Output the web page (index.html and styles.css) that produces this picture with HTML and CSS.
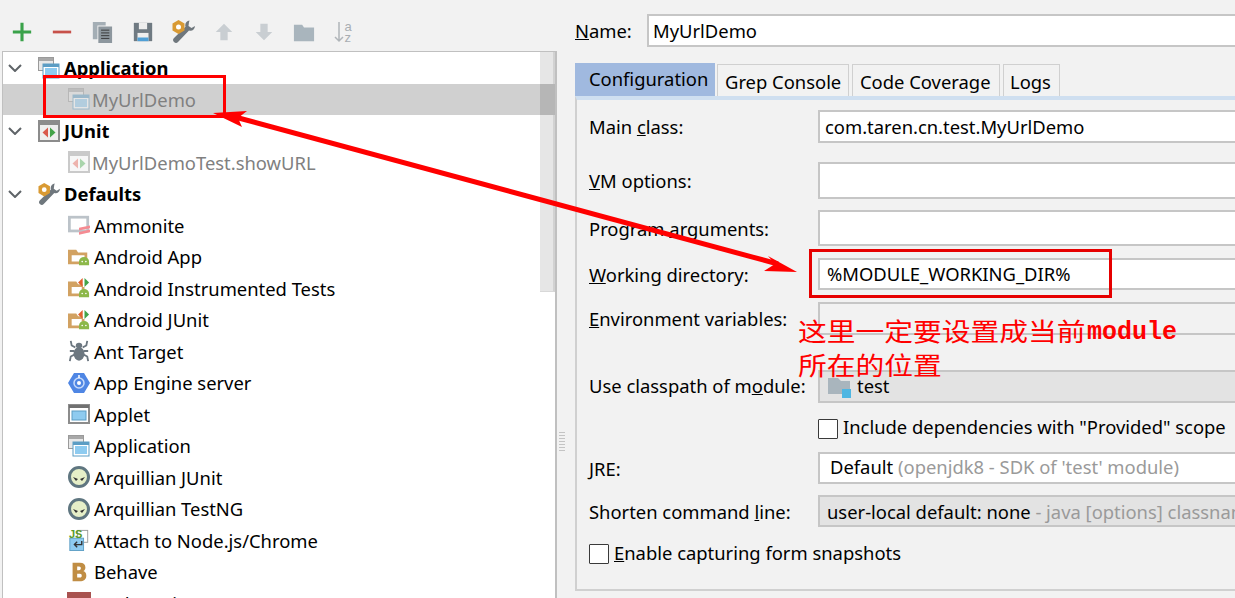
FILE: index.html
```html
<!DOCTYPE html>
<html lang="en">
<head>
<meta charset="utf-8">
<title>Run/Debug Configurations</title>
<link rel="stylesheet" href="styles.css">
</head>
<body>
<svg class="defs" width="0" height="0">
  <defs>
    <symbol id="i-app" viewBox="0 0 22 22">
      <rect x="0.5" y="0.5" width="15" height="13" fill="#e8e8e8" stroke="#9a9a9a"/>
      <rect x="1" y="1" width="14" height="3" fill="#a8a8a8"/>
      <rect x="5" y="7" width="16" height="14" fill="#fff" stroke="#5c9dc4"/>
      <rect x="5" y="7" width="16" height="3" fill="#5c9dc4"/>
      <rect x="7" y="11" width="12" height="8" fill="#8ecbf0"/>
    </symbol>
    <symbol id="i-junit" viewBox="0 0 22 22">
      <rect x="1" y="1" width="20" height="20" fill="#eee" stroke="#8c8c8c" stroke-width="2"/>
      <rect x="1" y="1" width="20" height="4" fill="#8c8c8c"/>
      <path d="M10 7.500v10L4.500 12.500z" fill="#d9594c"/>
      <path d="M12 7.500v10l5.500-5z" fill="#44a349"/>
    </symbol>
    <symbol id="i-wrench" viewBox="0 0 23 23">
      <path d="M17.500.5c-3 .3-5 3.300-4 6.300L2 18c-1.300 1.300-1.300 2.800 0 4s2.800 1.200 4 0L17 10.500c3 1 5.700-1 6-4.500l-3.500 2-3-2 .5-3.800z" fill="#6f777d"/>
      <path d="M6.500 0l6 3.500v7l-6 3.500-6-3.500v-7z" fill="#d99a33"/>
      <circle cx="6.500" cy="7" r="2.500" fill="#fff"/>
    </symbol>
    <symbol id="i-ammonite" viewBox="0 0 24 22">
      <rect x="1.500" y="2.500" width="20" height="15" fill="#fff" stroke="#bcc3c9" stroke-width="3"/>
      <path d="M12 14l12-2.500v3L12 17zM12 18.500l12-2.500v3l-12 2.500z" fill="#f58b92"/>
    </symbol>
    <symbol id="i-android" viewBox="0 0 24 22">
      <path d="M0 3h9l2 3h10v6h-3V9H4v7h8v3H0z" fill="#d2a262"/>
      <path d="M12 20v-4a5.500 5 0 0 1 11 0v4z" fill="#8db84a"/>
      <circle cx="15.500" cy="16" r=".9" fill="#fff"/><circle cx="19.500" cy="16" r=".9" fill="#fff"/>
    </symbol>
    <symbol id="i-android-test" viewBox="0 0 24 24">
      <path d="M0 5h9l2 3h5v3h2V14h-3V11H4v7h8v3H0z" fill="#d2a262"/>
      <path d="M12 22v-4a5.500 5 0 0 1 11 0v4z" fill="#8db84a"/>
      <circle cx="15.500" cy="18" r=".9" fill="#fff"/><circle cx="19.500" cy="18" r=".9" fill="#fff"/>
      <path d="M16 1v10l-5-5z" fill="#e0622f"/><path d="M18 1v10l5-5z" fill="#44a349"/>
    </symbol>
    <symbol id="i-ant" viewBox="0 0 22 24">
      <g stroke="#6c7780" stroke-width="2" fill="none">
        <path d="M7 8L3 6 2 1M15 8l4-2 1-5M6 12H1M16 12h5M6 16l-4 2-1 5M16 16l4 2 1 5"/>
      </g>
      <ellipse cx="11" cy="6" rx="3.500" ry="3" fill="#6c7780"/>
      <ellipse cx="11" cy="15" rx="6" ry="7.500" fill="#6c7780"/>
    </symbol>
    <symbol id="i-engine" viewBox="0 0 22 20">
      <path d="M6 0h10l6 10-6 10H6L0 10z" fill="#4f86e4"/>
      <circle cx="11" cy="10" r="5" fill="none" stroke="#c6dafb" stroke-width="1.500"/>
      <circle cx="11" cy="10" r="2" fill="#fff"/>
      <path d="M11 2v3" stroke="#fff" stroke-width="1.500"/>
    </symbol>
    <symbol id="i-applet" viewBox="0 0 22 20">
      <rect x="1" y="1" width="20" height="18" fill="#fff" stroke="#8c8c8c" stroke-width="2"/>
      <rect x="1" y="1" width="20" height="3" fill="#707070"/>
      <rect x="4" y="7" width="14" height="9" fill="#8ecbf0" stroke="#5c9dc4"/>
    </symbol>
    <symbol id="i-alien" viewBox="0 0 22 22">
      <circle cx="11" cy="11" r="9.500" fill="#e6efc8" stroke="#5f7680" stroke-width="3"/>
      <path d="M5 11l5 2-2 2zM17 11l-5 2 2 2z" fill="#333"/>
    </symbol>
    <symbol id="i-node" viewBox="0 0 22 24">
      <rect x="9.500" y="1.500" width="11" height="13" fill="#fff" stroke="#9a9a9a"/>
      <rect x="1" y="10" width="15" height="13.500" fill="#8ecbf0" stroke="#5c9dc4"/>
      <path d="M14 13v4H6M9 14l-3 3 3 3" fill="none" stroke="#333" stroke-width="1.500"/>
      <text x="0" y="10" class="js-text">JS</text>
    </symbol>
    <symbol id="i-b" viewBox="-4 -2 24 24">
      <path fill-rule="evenodd" d="M1 0h8c4 0 6 2 6 5 0 2-1 3.500-2.500 4 2 .5 3.500 2 3.500 5 0 4-3 6-7 6H1zM6 4v4h2c1.500 0 2-.8 2-2s-.5-2-2-2zM6 12v4h3c1.500 0 2-1 2-2s-.5-2-2-2z" fill="#c08d44"/>
    </symbol>
    <symbol id="i-chev" viewBox="0 0 14 8">
      <path d="M1 1l6 6 6-6" fill="none" stroke="#5f6468" stroke-width="2"/>
    </symbol>
  </defs>
</svg>

<div class="window">
  <div class="left">
    <div class="toolbar">
      <svg class="tool" viewBox="0 0 24 24"><path d="M12 2v20M2 12h20" stroke="#3aa24a" stroke-width="3.400"/></svg>
      <svg class="tool" viewBox="0 0 24 24"><path d="M2 12h20" stroke="#c7514a" stroke-width="3"/></svg>
      <svg class="tool" viewBox="0 0 24 24"><path d="M2 1h14v4H7v15H2z" fill="#a4aeb5"/><rect x="8" y="6" width="15" height="18" fill="#8d979e"/><path d="M11 10h9M11 13h9M11 16h9M11 19h9" stroke="#333" stroke-width="1"/></svg>
      <svg class="tool" viewBox="0 0 24 24"><path d="M2 2h20v20H2z" fill="#6f7a82"/><rect x="7.500" y="2" width="9" height="7" fill="#eee"/><rect x="6" y="13" width="12" height="9" fill="#eee"/><rect x="6" y="18" width="12" height="4" fill="#4f9fd6"/></svg>
      <svg class="tool tool-wrench"><use href="#i-wrench"/></svg>
      <svg class="tool" viewBox="0 0 24 24"><path d="M12 3l9 9h-5v9H8v-9H3z" fill="#c9ced2"/></svg>
      <svg class="tool" viewBox="0 0 24 24"><path d="M12 21l9-9h-5V3H8v9H3z" fill="#c9ced2"/></svg>
      <svg class="tool" viewBox="0 0 24 24"><path d="M1 4h9l2 3h11v15H1z" fill="#a9b5bd"/></svg>
      <div class="tool tool-sort"><svg class="sort-arrow" viewBox="0 0 10 22"><path d="M5 1v19M1 16l4 4 4-4" fill="none" stroke="#b0b5b9" stroke-width="1.500"/></svg><span class="sort-az">a<br>z</span></div>
    </div>
    <div class="tree-frame">
      <div class="tree">
        <div class="row"><svg class="chev"><use href="#i-chev"/></svg><svg class="ico-top"><use href="#i-app"/></svg><b class="group">Application</b></div>
        <div class="row row-sel"><svg class="ico-child dim"><use href="#i-app"/></svg><span class="muted">MyUrlDemo</span></div>
        <div class="row"><svg class="chev"><use href="#i-chev"/></svg><svg class="ico-top"><use href="#i-junit"/></svg><b class="group">JUnit</b></div>
        <div class="row"><svg class="ico-child dim"><use href="#i-junit"/></svg><span class="muted">MyUrlDemoTest.showURL</span></div>
        <div class="row"><svg class="chev"><use href="#i-chev"/></svg><svg class="ico-top"><use href="#i-wrench"/></svg><b class="group">Defaults</b></div>
        <div class="row"><svg class="ico-child"><use href="#i-ammonite"/></svg><span class="item">Ammonite</span></div>
        <div class="row"><svg class="ico-child"><use href="#i-android"/></svg><span class="item">Android App</span></div>
        <div class="row"><svg class="ico-child"><use href="#i-android-test"/></svg><span class="item">Android Instrumented Tests</span></div>
        <div class="row"><svg class="ico-child"><use href="#i-android-test"/></svg><span class="item">Android JUnit</span></div>
        <div class="row"><svg class="ico-child"><use href="#i-ant"/></svg><span class="item">Ant Target</span></div>
        <div class="row"><svg class="ico-child"><use href="#i-engine"/></svg><span class="item">App Engine server</span></div>
        <div class="row"><svg class="ico-child"><use href="#i-applet"/></svg><span class="item">Applet</span></div>
        <div class="row"><svg class="ico-child"><use href="#i-app"/></svg><span class="item">Application</span></div>
        <div class="row"><svg class="ico-child"><use href="#i-alien"/></svg><span class="item">Arquillian JUnit</span></div>
        <div class="row"><svg class="ico-child"><use href="#i-alien"/></svg><span class="item">Arquillian TestNG</span></div>
        <div class="row"><svg class="ico-child"><use href="#i-node"/></svg><span class="item">Attach to Node.js/Chrome</span></div>
        <div class="row"><svg class="ico-child"><use href="#i-b"/></svg><span class="item">Behave</span></div>
        <div class="row"><svg class="chev chev-sub"><use href="#i-chev"/></svg><span class="ico-bnd"></span><span class="item">Bnd OSGi</span></div>
      </div>
      <div class="scrollbar"></div>
    </div>
  </div>

  <div class="splitter"><span class="grip"></span></div>

  <div class="right">
    <div class="name-row">
      <span class="name-label"><u>N</u>ame:</span>
      <div class="field name-field">MyUrlDemo</div>
    </div>
    <div class="tabs">
      <span class="tab tab-on">Configuration</span>
      <span class="tab tab-grep">Grep Console</span>
      <span class="tab tab-cov">Code Coverage</span>
      <span class="tab tab-logs">Logs</span>
    </div>
    <div class="panel">
      <div class="line l-main"><span class="label">Main <u>c</u>lass:</span><div class="field">com.taren.cn.test.MyUrlDemo</div></div>
      <div class="line l-vm"><span class="label"><u>V</u>M options:</span><div class="field"></div></div>
      <div class="line l-args"><span class="label">Program <u>a</u>rguments:</span><div class="field"></div></div>
      <div class="line l-dir"><span class="label"><u>W</u>orking directory:</span><div class="field field-dir">%MODULE_WORKING_DIR%</div></div>
      <div class="line l-env"><span class="label"><u>E</u>nvironment variables:</span><div class="field field-off"></div></div>
      <div class="line l-mod"><span class="label label-high"><span>Use classpath of m<u>o</u>dule:</span></span><div class="field field-sel field-mod">
        <svg class="mod-ico" viewBox="0 0 23 20"><path d="M0 0h10l3 3h9v13H0z" fill="#a9b5bd"/><rect x="14" y="11" width="9" height="9" fill="#4eb6e2"/></svg>test</div></div>
      <div class="line l-inc"><span class="label"></span><label class="check"><span class="box"></span><span class="check-text">Include dependencies with "Provided" scope</span></label></div>
      <div class="line l-jre"><span class="label"><u>J</u>RE:</span><div class="field field-jre">Default <span class="hint">(openjdk8 - SDK of 'test' module)</span></div></div>
      <div class="line l-short"><span class="label">Shorten command <u>l</u>ine:</span><div class="field field-sel field-short">user-local default: none <span class="hint">- java [options] classname [args]</span></div></div>
      <div class="line l-snap"><label class="check"><span class="box"></span><span class="check-text"><u>E</u>nable capturing form snapshots</span></label></div>
    </div>
  </div>

  <svg class="overlay" viewBox="0 0 1235 598">
    <rect x="44.500" y="76.500" width="180" height="40" fill="none" stroke="#f00" stroke-width="3"/>
    <rect x="810.500" y="250.500" width="300" height="46" fill="none" stroke="#e60000" stroke-width="3"/>
    <path d="M235 117L778 264" stroke="#f00" stroke-width="5"/>
    <path d="M213 113L247 111 238 118 242 127z" fill="#f00"/>
    <path d="M797 272L768 256 775 264 764 271z" fill="#f00"/>
  </svg>
  <div class="note">
    <div class="note-line"><span class="note-cjk note-first">这里一定要设置成当前</span><span class="note-mono">module</span></div>
    <div class="note-line"><span class="note-cjk">所在的位置</span></div>
  </div>
</div>
</body>
</html>
```

FILE: styles.css
```css
* { box-sizing: border-box; }
html, body { margin: 0; padding: 0; }
body {
  width: 1235px;
  height: 598px;
  overflow: hidden;
  background: #f2f2f2;
  font-family: "Noto Sans", "Open Sans", sans-serif;
  font-size: 18.400px;
  color: #000;
}
.defs { position: absolute; }
.js-text { font: bold 12px "Liberation Sans", sans-serif; fill: #5b9a2c; }

.window {
  position: relative;
  display: flex;
  width: 1235px;
  height: 598px;
  overflow: hidden;
}

/* left column */
.left { width: 557px; flex: none; display: flex; flex-direction: column; }
.toolbar {
  height: 51px;
  flex: none;
  display: flex;
  align-items: center;
  padding: 12px 0 0 11px;
  gap: 18.200px;
}
.tool { width: 22px; height: 22px; flex: none; }
.tool-wrench { width: 23px; height: 23px; }
.tool-sort { position: relative; display: flex; }
.sort-arrow { width: 10px; height: 22px; }
.sort-az {
  font: 13px/11px "Liberation Sans", sans-serif;
  color: #a9aeb2;
  margin-left: 1px;
}
.tree-frame {
  flex: 1;
  position: relative;
  margin-left: 2px;
  border-top: 1px solid #c0c0c0;
  border-left: 1px solid #c0c0c0;
  border-right: 2px solid #c0c0c0;
  background: #fff;
  overflow: hidden;
}
.tree { display: grid; grid-auto-rows: 31.500px; }
.row { display: flex; align-items: center; position: relative; padding-left: 5px; white-space: nowrap; }
.row-sel { background: #d0d0d0; }
.chev { width: 14px; height: 8px; flex: none; margin-right: 16px; }
.chev-sub { margin-left: 32px; margin-right: 13px; }
.ico-top { width: 22px; height: 22px; flex: none; margin-right: 4px; }
.ico-child { width: 22px; height: 22px; flex: none; margin-left: 60px; margin-right: 4px; }
.ico-bnd { width: 24px; height: 22px; background: #a9524f; flex: none; margin-right: 4px; }
.dim { opacity: .45; }
.group { font-weight: 700; }
.muted { color: #808080; margin-left: -2px; }
.scrollbar {
  position: absolute;
  top: 0;
  right: 0;
  width: 15px;
  height: 240px;
  background: #e6e6e6;
  border-right: 2px solid #d2d2d2;
  border-bottom: 1px solid #d8d8d8;
}
.scrollbar::after {
  content: "";
  position: absolute;
  top: 32px;
  left: 0;
  right: -2px;
  height: 31px;
  background: #b6b6b6;
}

/* splitter */
.splitter { width: 18px; flex: none; position: relative; }
.grip {
  position: absolute;
  top: 431px;
  left: 2px;
  width: 6px;
  height: 20px;
  background: repeating-linear-gradient(0deg, #c4c4c4 0 1px, transparent 1px 3px);
}

/* right column */
.right { flex: 1; min-width: 0; display: flex; flex-direction: column; }
.name-row { display: flex; align-items: center; height: 33px; margin-top: 14px; }
.name-label { width: 72px; flex: none; }
.field {
  height: 100%;
  flex: 1;
  min-width: 0;
  background: #fff;
  border: 2px solid #c6c6c6;
  display: flex;
  align-items: center;
  padding-left: 5px;
  white-space: pre;
  overflow: hidden;
  margin-right: -10px;
}
.name-field { padding-left: 4px; }
.tabs { display: flex; align-items: flex-end; height: 49px; gap: 2px; }
.tab {
  height: 32px;
  padding: 1px 0 0 7px;
  display: flex;
  align-items: center;
  white-space: nowrap;
  border: 1px solid #d0d0d0;
  border-bottom: 0;
  background: #f2f2f2;
}
.tab-on { width: 140px; background: #a0b9df; padding: 0 0 3px 13px; height: 33px; border-color: #a0b9df; }
.tab-grep { width: 132px; }
.tab-cov { width: 148px; margin-left: 1px; }
.tab-logs { width: 57px; margin-left: 1px; padding-left: 6px; }
.panel {
  border-top: 4px solid #cfdff0;
  border-left: 2px solid #d0d0d0;
  border-bottom: 2px solid #d0d0d0;
  height: 495px;
  padding: 10px 0 0 12px;
  margin-right: -10px;
}
.line { display: flex; align-items: center; }
.label { width: 229px; flex: none; white-space: nowrap; }
.label-high { padding-bottom: 2px; }
.l-main { height: 33px; }
.l-vm { height: 37px; margin-top: 19px; }
.l-args { height: 36px; margin-top: 11px; }
.l-dir { height: 32px; margin-top: 12px; }
.l-env { height: 33px; margin-top: 12px; }
.l-mod { height: 33px; margin-top: 35px; }
.l-inc { height: 19px; margin-top: 16px; }
.l-jre { height: 32px; margin-top: 14px; }
.l-short { height: 32px; margin-top: 11px; }
.l-snap { height: 20px; margin-top: 17px; }
.field-off { background: #f2f2f2; }
.field-sel { background: #e3e3e3; padding-left: 7px; }
.field-mod { padding-bottom: 2px; }
.field-jre { padding: 0 0 4px 10px; }
.field-dir { padding: 0 0 2px 7px; }
.mod-ico { width: 23px; height: 20px; margin: 4px 6px 0 1px; flex: none; }
.hint { color: #9a9a9a; }
.check { display: flex; align-items: center; gap: 5px; white-space: nowrap; }
.check-text { padding-bottom: 4px; }
.box { width: 20px; height: 20px; flex: none; background: #fff; border: 1.500px solid #3a3a3a; border-radius: 1px; }

/* annotations over the dialog */
.overlay { position: absolute; inset: 0; width: 1235px; height: 598px; pointer-events: none; }
.note {
  position: absolute;
  left: 798px;
  top: 313px;
  color: #f00;
  white-space: nowrap;
}
.note-line { height: 34px; display: flex; align-items: center; }
.note-cjk {
  display: inline-block;
  font-family: "Noto Sans CJK SC", sans-serif;
  font-size: 25px;
  font-weight: 400;
  transform: scaleX(1.150);
  transform-origin: left center;
}
.note-first { margin-right: 39px; }
.note-mono { font: bold 25px "Liberation Mono", monospace; padding-top: 5px; }
```
